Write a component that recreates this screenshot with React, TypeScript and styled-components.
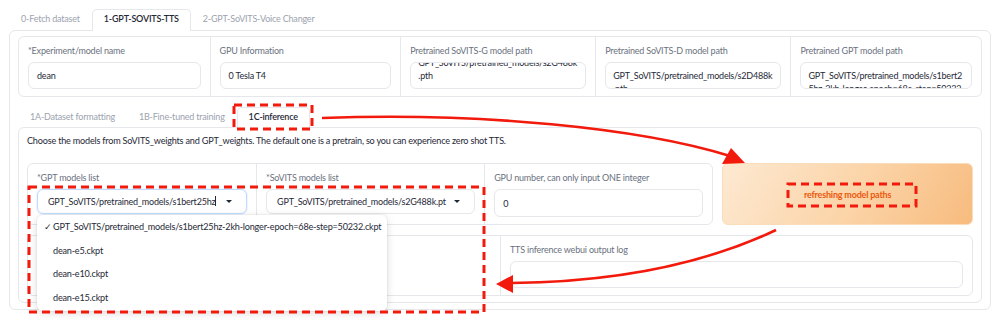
import React from 'react';
import styled, { createGlobalStyle } from 'styled-components';

const GlobalStyle = createGlobalStyle`
  html, body {
    margin: 0;
    padding: 0;
    background: #ffffff;
  }
  body {
    font-family: Lato, "Noto Sans", sans-serif;
    font-size: 9px;
    letter-spacing: -0.2px;
    color: #1f2937;
  }
  * {
    box-sizing: border-box;
  }
`;

const Page = styled.div`
  position: relative;
  width: 1000px;
  height: 320px;
  padding: 9px 9px 0 9px;
  overflow: hidden;
`;

const TabBar = styled.div`
  display: flex;
  align-items: flex-end;
`;

interface TabProps {
  $active?: boolean;
  $sub?: boolean;
}
const Tab = styled.div<TabProps>`
  position: relative;
  z-index: 1;
  height: ${({ $sub }) => ($sub ? '21px' : '22px')};
  line-height: ${({ $sub }) => ($sub ? '18px' : '17px')};
  padding: 0 11px;
  margin-bottom: -1px;
  font-size: 9px;
  white-space: nowrap;
  color: ${({ $active }) => ($active ? '#1f2937' : '#9ca3af')};
  font-weight: ${({ $active }) => ($active ? 600 : 400)};
  background: ${({ $active }) => ($active ? '#ffffff' : 'transparent')};
  border: 1px solid ${({ $active }) => ($active ? '#e5e7eb' : 'transparent')};
  border-bottom: none;
  border-radius: 5px 5px 0 0;
`;

const Panel = styled.div`
  border: 1px solid #e5e7eb;
  border-radius: 6px;
  padding: 5px 8px 6px 8px;
`;

const Card = styled.div<{ $cols: number }>`
  display: grid;
  grid-template-columns: repeat(${({ $cols }) => $cols}, 1fr);
  border: 1px solid #e5e7eb;
  border-radius: 6px;
  background: #ffffff;
  flex: 11;
`;

const Col = styled.div`
  display: flex;
  flex-direction: column;
  padding: 7px 9px 7px 9px;
  & + & {
    border-left: 1px solid #e5e7eb;
  }
`;

const Label = styled.div`
  font-size: 9px;
  line-height: 13px;
  color: #6b7280;
  margin-bottom: 5px;
  white-space: nowrap;
`;

const Field = styled.div<{ $h?: number; $focus?: boolean; $select?: boolean }>`
  height: ${({ $h }) => $h || 27}px;
  border: 1px solid ${({ $focus }) => ($focus ? '#bfdbfe' : '#e5e7eb')};
  box-shadow: ${({ $focus }) => ($focus ? '0 0 0 1px #eff6ff' : 'none')};
  border-radius: 6px;
  padding: ${({ $select }) => ($select ? '0 14px 0 10px' : '0 8px')};
  font-size: 9px;
  color: #1f2937;
  background: #ffffff;
  overflow: hidden;
  display: flex;
  align-items: center;
  white-space: nowrap;
`;

const AreaText = styled.div<{ $shift: number }>`
  align-self: flex-start;
  margin-top: ${({ $shift }) => $shift}px;
  margin-left: -1px;
  line-height: 13px;
`;

const AreaLine = styled.div`
  white-space: nowrap;
`;

const SelectWrap = styled.div`
  position: relative;
`;

const SelectText = styled.span`
  flex: 1;
  overflow: hidden;
  white-space: nowrap;
`;

const Misspelt = styled.span`
  text-decoration: underline dotted #ef4444;
  text-underline-offset: 2px;
`;

const Caret = styled.span`
  display: inline-block;
  width: 1px;
  height: 10px;
  background: #1f2937;
  vertical-align: -1px;
`;

const Arrow = styled.span`
  width: 0;
  height: 0;
  margin-left: 6px;
  border-left: 3px solid transparent;
  border-right: 3px solid transparent;
  border-top: 3.5px solid #1f2937;
`;

const SubTabs = styled(TabBar)`
  margin-top: 10px;
`;

const InnerPanel = styled.div`
  border: 1px solid #e5e7eb;
  border-radius: 6px;
  padding: 6px 8px 6px 8px;
`;

const Description = styled.div`
  font-size: 9.1px;
  line-height: 14px;
  color: #1f2937;
  margin-bottom: 15px;
  white-space: nowrap;
`;

const Row = styled.div`
  display: flex;
  gap: 9px;
  height: 62px;
`;

const RefreshButton = styled.div`
  flex: 4;
  display: flex;
  align-items: center;
  justify-content: center;
  border-radius: 6px;
  background: linear-gradient(120deg, #fde9d2 0%, #fbd3a6 55%, #f7bb7e 100%);
  border: 1px solid #fbdcb8;
  color: #ea580c;
  font-size: 9px;
  font-weight: 700;
`;

const LogCard = styled(Card)`
  margin-top: 10px;
  height: 61px;
`;

const Menu = styled.div`
  position: absolute;
  z-index: 5;
  top: calc(100% + 1px);
  left: 0;
  width: 350px;
  padding: 0 0 2px 0;
  background: #ffffff;
  border-radius: 6px;
  box-shadow: 0 2px 8px rgba(0, 0, 0, 0.14), 0 0 0 1px rgba(0, 0, 0, 0.03);
`;

const MenuItem = styled.div`
  display: flex;
  align-items: center;
  height: 23.5px;
  padding-left: 7px;
  font-size: 9.1px;
  color: #1f2937;
  white-space: nowrap;
`;

const Check = styled.span`
  width: 9px;
  font-size: 8.5px;
`;

const Overlay = styled.svg`
  position: absolute;
  top: 0;
  left: 0;
  z-index: 10;
  pointer-events: none;
`;

const RED = '#f21a0c';

const Annotations = () => (
  <Overlay width="1000" height="320" viewBox="0 0 1000 320">
    <g fill="none" stroke={RED} strokeWidth="3" strokeDasharray="8 5">
      <rect x="234" y="105" width="78" height="24" />
      <rect x="29" y="187" width="455" height="125" />
      <rect x="788" y="184" width="128" height="22" />
    </g>
    <path
      d="M 322 118 C 480 112 640 128 730 156"
      fill="none"
      stroke={RED}
      strokeWidth="2.6"
    />
    <polygon points="745,163 722,164 731,148" fill={RED} />
    <path
      d="M 776 230 C 700 266 610 282 512 283"
      fill="none"
      stroke={RED}
      strokeWidth="2.6"
    />
    <polygon points="496,284 513,275 513,293" fill={RED} />
  </Overlay>
);

interface TopField {
  label: string;
  text?: string;
  lines?: string[];
  shift?: number;
}

const topFields: TopField[] = [
  { label: '*Experiment/model name', text: 'dean' },
  { label: 'GPU Information', text: '0 Tesla T4' },
  {
    label: 'Pretrained SoVITS-G model path',
    lines: ['GPT_SoVITS/pretrained_models/s2G488k', '.pth'],
    shift: -7,
  },
  {
    label: 'Pretrained SoVITS-D model path',
    lines: ['GPT_SoVITS/pretrained_models/s2D488k', '.pth'],
    shift: 5.5,
  },
  {
    label: 'Pretrained GPT model path',
    lines: [
      'GPT_SoVITS/pretrained_models/s1bert2',
      '5hz-2kh-longer-epoch=68e-step=50232',
      '.ckpt',
    ],
    shift: 5.5,
  },
];

const gptModels = ['dean-e5.ckpt', 'dean-e10.ckpt', 'dean-e15.ckpt'];

export default function App() {
  return (
    <Page>
      <GlobalStyle />
      <TabBar>
        <Tab>0-Fetch dataset</Tab>
        <Tab $active>1-GPT-SOVITS-TTS</Tab>
        <Tab>2-GPT-SoVITS-Voice Changer</Tab>
      </TabBar>
      <Panel>
        <Card $cols={5}>
          {topFields.map(f => (
            <Col key={f.label}>
              <Label>{f.label}</Label>
              <Field>
                {f.lines ? (
                  <AreaText $shift={f.shift || 0}>
                    {f.lines.map(l => (
                      <AreaLine key={l}>{l}</AreaLine>
                    ))}
                  </AreaText>
                ) : (
                  f.text
                )}
              </Field>
            </Col>
          ))}
        </Card>
        <SubTabs>
          <Tab $sub>1A-Dataset formatting</Tab>
          <Tab $sub>1B-Fine-tuned training</Tab>
          <Tab $sub $active>
            1C-inference
          </Tab>
        </SubTabs>
        <InnerPanel>
          <Description>
            Choose the models from SoVITS_weights and GPT_weights. The default
            one is a pretrain, so you can experience zero shot TTS.
          </Description>
          <Row>
            <Card $cols={3}>
              <Col>
                <Label>*GPT models list</Label>
                <SelectWrap>
                  <Field $h={25} $focus $select>
                    <SelectText>
                      GPT_SoVITS/pretrained_models/<Misspelt>s1bert25hz</Misspelt>
                      <Caret />
                    </SelectText>
                    <Arrow />
                  </Field>
                  <Menu>
                    <MenuItem>
                      <Check>✓</Check>
                      GPT_SoVITS/pretrained_models/s1bert25hz-2kh-longer-epoch=68e-step=50232.ckpt
                    </MenuItem>
                    {gptModels.map(m => (
                      <MenuItem key={m}>
                        <Check />
                        {m}
                      </MenuItem>
                    ))}
                  </Menu>
                </SelectWrap>
              </Col>
              <Col>
                <Label>*SoVITS models list</Label>
                <Field $h={25} $select>
                  <SelectText>GPT_SoVITS/pretrained_models/s2G488k.pt</SelectText>
                  <Arrow />
                </Field>
              </Col>
              <Col>
                <Label>GPU number, can only input ONE integer</Label>
                <Field $h={28}>0</Field>
              </Col>
            </Card>
            <RefreshButton>refreshing model paths</RefreshButton>
          </Row>
          <LogCard $cols={2}>
            <Col />
            <Col>
              <Label>TTS inference webui output log</Label>
              <Field />
            </Col>
          </LogCard>
        </InnerPanel>
      </Panel>
      <Annotations />
    </Page>
  );
}
